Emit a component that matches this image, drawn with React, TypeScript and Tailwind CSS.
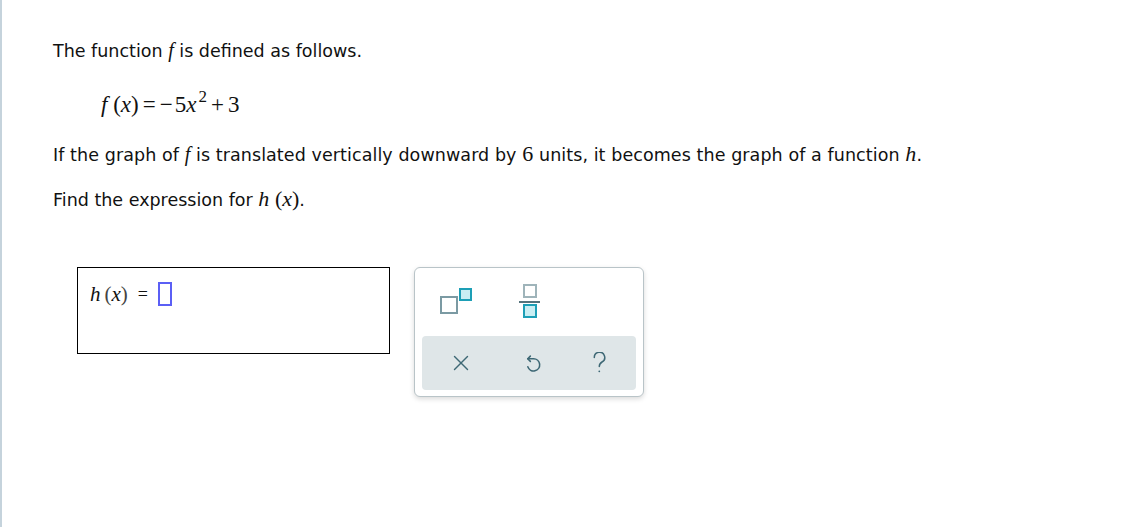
import { X } from "lucide-react";

const serif = "font-['Liberation_Serif',serif]";

function ExponentIcon() {
  return (
    <div className="relative h-[30px] w-[33px]">
      <div className="absolute left-0 top-[12px] h-[18px] w-[18px] border-2 border-[#7b9aa3] bg-white" />
      <div className="absolute left-[19px] top-[4px] h-[13px] w-[13px] border-2 border-[#1d9fb6] bg-[#c9eef3]" />
    </div>
  );
}

function FractionIcon() {
  return (
    <div className="flex w-[21px] flex-col items-center">
      <div className="h-[14px] w-[14px] border-2 border-[#9fb4ba] bg-white" />
      <div className="mt-[3px] h-[2px] w-[21px] bg-[#55737c]" />
      <div className="mt-[1px] h-[14px] w-[14px] border-2 border-[#1d9fb6] bg-[#c9eef3]" />
    </div>
  );
}

function UndoIcon() {
  return (
    <svg width="17" height="21" viewBox="0 0 16 20" fill="none" stroke="#3e6875" strokeWidth="1.5" strokeLinecap="round" strokeLinejoin="round">
      <path d="M5 3 L2.5 5.5 L5 8" />
      <path d="M2.5 5.5 H8 A5.8 5.8 0 1 1 2.6 13.2" />
    </svg>
  );
}

function HelpIcon() {
  return (
    <svg width="15" height="22" viewBox="0 0 14 22" fill="none" stroke="#3e6875" strokeWidth="1.5" strokeLinecap="round">
      <path d="M1.8 5.5 A5.2 5.2 0 1 1 9.5 10 C7.5 11.2 6.8 12.3 6.8 14.5" />
      <circle cx="6.8" cy="19.3" r="0.9" fill="#3e6875" stroke="none" />
    </svg>
  );
}

export default function App() {
  return (
    <div className="flex min-h-[527px] bg-white font-['DejaVu_Sans',Verdana,sans-serif] text-[17.5px] text-[#111]">
      <div className="w-[2px] shrink-0 bg-[#c5d3dc]" />
      <div className="flex-1 pl-[51px] pt-[38px]">
        <p className="leading-[24px]">
          The function <span className={`${serif} italic text-[20px]`}>f</span> is defined as follows.
        </p>
        <p className={`${serif} ml-[48px] mt-[28px] text-[23px] leading-[28px]`}>
          <span className="italic">f</span> (<span className="italic">x</span>)
          <span className="mx-[4px]">=</span>
          <span className="mr-[2px]">−</span>5<span className="italic">x</span>
          <span className="relative bottom-[10px] ml-[2px] text-[17px]">2</span>
          <span className="mx-[4px]">+</span>3
        </p>
        <p className="mt-[21px] leading-[24px] tracking-[0.08px]">
          If the graph of <span className={`${serif} italic text-[20px]`}>f</span> is translated vertically downward by{" "}
          <span className={`${serif} text-[22px]`}>6</span> units, it becomes the graph of a function{" "}
          <span className={`${serif} italic text-[22px]`}>h</span>.
        </p>
        <p className="mt-[20px] leading-[24px]">
          Find the expression for <span className={`${serif} italic text-[22px]`}>h</span>{" "}
          <span className={`${serif} text-[22px]`}>
            (<span className="italic">x</span>)
          </span>
          .
        </p>

        <div className="mt-[55px] flex items-start gap-[24px] pl-[24px]">
          <div className="h-[87px] w-[313px] border border-black px-[12px] pt-[13px]">
            <div className={`${serif} flex items-center text-[21px] leading-[26px]`}>
              <span className="italic">h</span>
              <span className="ml-[4px] text-[#444]">(</span>
              <span className="italic">x</span>
              <span className="text-[#444]">)</span>
              <span className="ml-[10px] text-[18px]">=</span>
              <span className="ml-[10px] h-[24px] w-[14px] border-2 border-[#5b5ff5]" />
            </div>
          </div>

          <div className="w-[230px] rounded-[6px] border border-[#b9c4c8] bg-white px-[7px] pb-[6px] pt-[16px] shadow-[0_2px_5px_rgba(0,0,0,0.15)]">
            <div className="flex h-[52px] items-start">
              <div className="ml-[18px]">
                <ExponentIcon />
              </div>
              <div className="ml-[46px]">
                <FractionIcon />
              </div>
            </div>
            <div className="flex h-[54px] items-center justify-between rounded-[4px] bg-[#dfe6e8] pl-[26px] pr-[29px]">
              <X className="h-[26px] w-[26px] text-[#3e6875]" strokeWidth={1.3} />
              <UndoIcon />
              <HelpIcon />
            </div>
          </div>
        </div>
      </div>
    </div>
  );
}
